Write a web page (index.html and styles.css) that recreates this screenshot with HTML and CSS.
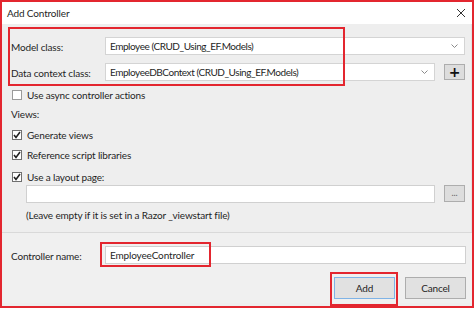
FILE: index.html
```html
<!DOCTYPE html>
<html lang="en">

<head>
    <meta charset="UTF-8">
    <title>Add Controller</title>
    <link rel="stylesheet" href="styles.css">
</head>

<body>
    <div class="dialog">
        <div class="titlebar">
            <span class="title">Add Controller</span>
            <span class="close">
                <svg width="10" height="10" viewBox="0 0 10 10"><path d="M1 1L9 9M9 1L1 9" stroke="#333" stroke-width="1" fill="none"/></svg>
            </span>
        </div>

        <div class="main">
            <div class="field-row first">
                <span class="label">Model class:</span>
                <div class="select">
                    <span class="value">Employee (CRUD_Using_EF.Models)</span>
                    <svg class="chevron" width="7" height="4" viewBox="0 0 7 4"><path d="M0.5 0.5L3.5 3.5L6.5 0.5" stroke="#8a8a8a" fill="none"/></svg>
                </div>
            </div>
            <div class="field-row">
                <span class="label">Data context class:</span>
                <div class="select">
                    <span class="value">EmployeeDBContext (CRUD_Using_EF.Models)</span>
                    <svg class="chevron" width="7" height="4" viewBox="0 0 7 4"><path d="M0.5 0.5L3.5 3.5L6.5 0.5" stroke="#8a8a8a" fill="none"/></svg>
                </div>
                <span class="small-btn plus">+</span>
            </div>

            <div class="check-row async">
                <span class="box"></span>
                <span>Use async controller actions</span>
            </div>
            <div class="text-row views">Views:</div>
            <div class="check-row gen">
                <span class="box checked"><svg width="8" height="8" viewBox="0 0 8 8"><path d="M1 4L3 6.5L7 1" stroke="#222" stroke-width="1.6" fill="none"/></svg></span>
                <span>Generate views</span>
            </div>
            <div class="check-row ref">
                <span class="box checked"><svg width="8" height="8" viewBox="0 0 8 8"><path d="M1 4L3 6.5L7 1" stroke="#222" stroke-width="1.6" fill="none"/></svg></span>
                <span>Reference script libraries</span>
            </div>
            <div class="check-row layout">
                <span class="box checked"><svg width="8" height="8" viewBox="0 0 8 8"><path d="M1 4L3 6.5L7 1" stroke="#222" stroke-width="1.6" fill="none"/></svg></span>
                <span>Use a layout page:</span>
            </div>
            <div class="layout-row">
                <div class="text-input"></div>
                <span class="small-btn dots">...</span>
            </div>
            <div class="text-row hint">(Leave empty if it is set in a Razor _viewstart file)</div>
        </div>

        <div class="footer">
            <div class="field-row name-row">
                <span class="label">Controller name:</span>
                <div class="text-input name-input">EmployeeController</div>
            </div>
            <div class="actions">
                <span class="btn primary">Add</span>
                <span class="btn">Cancel</span>
            </div>
        </div>

        <!-- red annotation boxes -->
        <div class="mark mark-classes"></div>
        <div class="mark mark-name"></div>
        <div class="mark mark-add"></div>
    </div>
</body>

</html>
```

FILE: styles.css
```css
body {
    margin: 0;
    font-family: Lato, "Noto Sans", sans-serif;
    font-size: 10px;
    letter-spacing: -0.15px;
    color: #1f1f1f;
    background-color: #ffffff;
}

.dialog {
    position: relative;
    width: 474px;
    height: 308px;
    box-sizing: border-box;
    border: 2px solid #e3262f;
    background-color: #eeeeee;
}

.titlebar {
    height: 22px;
    background-color: #ffffff;
    display: flex;
    align-items: center;
    justify-content: space-between;
    padding: 0 5px 0 5px;
}

.title {
    font-size: 10px;
}

.close {
    display: flex;
    margin-right: 1px;
}

.main {
    height: 208px;
    box-sizing: border-box;
    padding: 13px 6px 0 9px;
    border-right: 1px solid #e2e2e2;
}

.field-row {
    display: flex;
    align-items: center;
    height: 18px;
    margin-top: 8px;
}

.field-row.first {
    margin-top: 0;
}

.label {
    width: 94px;
    flex-shrink: 0;
    padding-top: 2px;
}

.select {
    flex: 1;
    height: 18px;
    box-sizing: border-box;
    background-color: #ffffff;
    border: 1px solid #d4d4d4;
    display: flex;
    align-items: center;
    justify-content: space-between;
    padding: 0 6px 0 4px;
}

.value {
    letter-spacing: -0.45px;
}

.small-btn {
    width: 21px;
    height: 16px;
    box-sizing: border-box;
    margin-left: 9px;
    background-color: #dddddd;
    border: 1px solid #adadad;
    display: flex;
    align-items: center;
    justify-content: center;
}

.plus {
    font-family: "DejaVu Sans", sans-serif;
    font-size: 14px;
    font-weight: bold;
    color: #111;
    line-height: 1;
}

.dots {
    font-size: 9px;
    color: #666;
    align-items: flex-end;
    padding-bottom: 3px;
}

.check-row {
    display: flex;
    align-items: center;
    height: 14px;
}

.box {
    width: 10px;
    height: 10px;
    box-sizing: border-box;
    margin: 0 5px 0 1px;
    background-color: #ffffff;
    border: 1px solid #9a9a9a;
    display: flex;
    align-items: center;
    justify-content: center;
}

.box.checked {
    border-color: #6f6f6f;
}

.text-row {
    height: 14px;
    display: flex;
    align-items: center;
}

.async { margin-top: 7px; }
.views { margin-top: 5px; }
.gen { margin-top: 7px; }
.ref { margin-top: 6px; }
.layout { margin-top: 8px; }

.layout-row {
    display: flex;
    margin: 1px 0 0 15px;
    height: 18px;
}

.text-input {
    flex: 1;
    height: 18px;
    box-sizing: border-box;
    background-color: #ffffff;
    border: 1px solid #d0d0d0;
    display: flex;
    align-items: center;
    padding-left: 4px;
}

.layout-row .small-btn {
    height: 17px;
}

.hint {
    margin: 5px 0 0 15px;
}

.footer {
    height: 71px;
    box-sizing: border-box;
    border-top: 1px solid #d9d9d9;
    background-color: #f0f0f0;
    padding: 13px 6px 0 9px;
}

.name-row {
    margin-top: 0;
}

.actions {
    display: flex;
    justify-content: flex-end;
    gap: 10px;
    margin-top: 13px;
}

.btn {
    width: 61px;
    height: 22px;
    box-sizing: border-box;
    background-color: #e1e1e1;
    border: 1px solid #adadad;
    display: flex;
    align-items: center;
    justify-content: center;
}

.btn.primary {
    border-color: #7fb3e6;
}

.mark {
    position: absolute;
    box-sizing: border-box;
    border: 2px solid #e3262f;
}

.mark-classes {
    left: 6px;
    top: 25px;
    width: 337px;
    height: 59px;
}

.mark-name {
    left: 98px;
    top: 240px;
    width: 111px;
    height: 25px;
}

.mark-add {
    left: 328px;
    top: 270px;
    width: 68px;
    height: 34px;
}
```
